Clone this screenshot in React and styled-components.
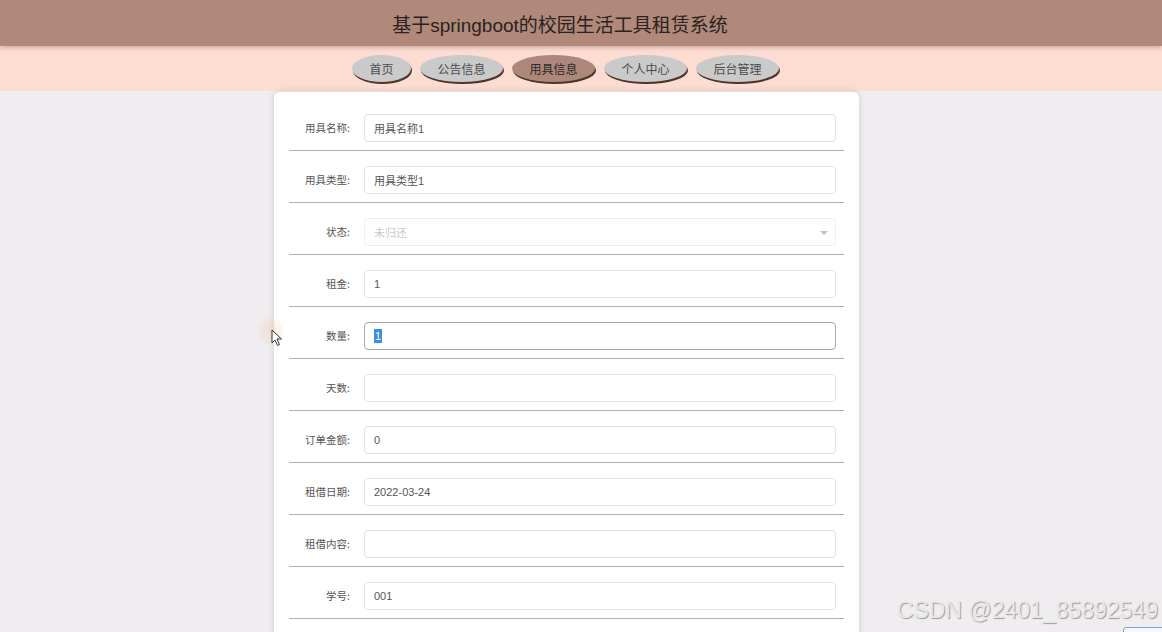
import styled, { createGlobalStyle } from "styled-components";

const GlobalStyle = createGlobalStyle`
  html, body {
    margin: 0;
    padding: 0;
    background: #efedf0;
    font-family: "Liberation Sans", "Noto Sans CJK SC", sans-serif;
    overflow: hidden;
  }
`;

const fields = [
  { label: "用具名称", value: "用具名称1" },
  { label: "用具类型", value: "用具类型1" },
  { label: "状态", value: "未归还", type: "select" },
  { label: "租金", value: "1" },
  { label: "数量", value: "1", focused: true },
  { label: "天数", value: "" },
  { label: "订单金额", value: "0" },
  { label: "租借日期", value: "2022-03-24" },
  { label: "租借内容", value: "" },
  { label: "学号", value: "001" },
  { label: "姓名", value: "姓名1" },
  { label: "手机号", value: "13823888881" },
];

const navItems = ["首页", "公告信息", "用具信息", "个人中心", "后台管理"];

const App = () => {
  return (
    <>
      <GlobalStyle />
      <Page>
        <Header>
          <Title>基于springboot的校园生活工具租赁系统</Title>
        </Header>
        <Nav>
          {navItems.map((item) => (
            <NavButton key={item} $active={item === "用具信息"}>{item}</NavButton>
          ))}
        </Nav>
        <Main>
          <Card>
            {fields.map((f) => (
              <Row key={f.label}>
                <Label>{f.label}:</Label>
                {f.type === "select" ? (
                  <Field $disabled>
                    {f.value}
                    <Caret />
                  </Field>
                ) : (
                  <Field $focused={f.focused}>
                    {f.focused ? <Selected>{f.value}</Selected> : f.value}
                  </Field>
                )}
              </Row>
            ))}
          </Card>
        </Main>
        <CursorMark>
          <svg width="12" height="18" viewBox="0 0 12 18">
            <path d="M1 1 L1 14 L4 11 L6.5 16.5 L8.5 15.5 L6 10 L10.5 10 Z" fill="#fff" stroke="#333" strokeWidth="1" />
          </svg>
        </CursorMark>
        <Watermark>CSDN @2401_85892549</Watermark>
        <CornerTab />
      </Page>
    </>
  );
};

const Page = styled.div`
  position: relative;
  min-height: 632px;
`;

const Header = styled.header`
  position: relative;
  z-index: 2;
  height: 46px;
  background: #b0897b;
  box-shadow: 0 2px 4px rgba(80, 40, 30, 0.25);
  display: flex;
  align-items: center;
  justify-content: center;
  padding-right: 42px;
`;

const Title = styled.h1`
  margin: 0;
  font-size: 19px;
  font-weight: 400;
  color: #2b2220;
`;

const Nav = styled.nav`
  height: 45px;
  background: #fddcd2;
  display: flex;
  align-items: center;
  justify-content: center;
  gap: 9px;
  padding-right: 31px;
`;

const NavButton = styled.button`
  height: 27px;
  margin-top: -1px;
  padding: 0 17.5px;
  border: none;
  border-radius: 50%;
  background: ${({ $active }) => ($active ? "#ad887a" : "#cacaca")};
  box-shadow: 1px 2px 0 #4e3429;
  font-family: "Liberation Sans", "Noto Sans CJK SC", sans-serif;
  font-size: 12px;
  color: ${({ $active }) => ($active ? "#2a2a2a" : "#4a4a4a")};
  cursor: pointer;
`;

const Main = styled.main`
  display: flex;
  justify-content: center;
  padding: 1px 29px 0 0;
`;

const Card = styled.section`
  width: 585px;
  box-sizing: border-box;
  background: #fff;
  border-radius: 6px 6px 0 0;
  box-shadow: 0 0 6px rgba(90, 60, 60, 0.2);
  padding: 7px 15px 20px;
`;

const Row = styled.div`
  display: flex;
  align-items: center;
  gap: 14px;
  padding: 15px 8px 8px 0;
  border-bottom: 1px solid #bba9ae;
`;

const Label = styled.label`
  width: 61px;
  flex-shrink: 0;
  text-align: right;
  font-family: "Noto Sans CJK SC", sans-serif;
  font-size: 10.5px;
  line-height: 14px;
  color: #555;
  white-space: nowrap;
`;

const Field = styled.div`
  position: relative;
  flex: 1;
  height: 28px;
  box-sizing: border-box;
  display: flex;
  align-items: center;
  padding: 0 9px;
  border: 1px solid ${({ $focused, $disabled }) => ($focused ? "#a9a9ad" : $disabled ? "#eceef2" : "#dfe1e6")};
  border-radius: 4px;
  background: #fff;
  font-family: "Liberation Sans", "Noto Sans CJK SC", sans-serif;
  font-size: 11px;
  color: ${({ $disabled }) => ($disabled ? "#c8cad0" : "#555")};
`;

const Selected = styled.span`
  background: #3b8ee8;
  color: #fff;
  padding: 0 1px;
  line-height: 14px;
`;

const Caret = styled.span`
  position: absolute;
  right: 7px;
  top: 12px;
  width: 0;
  height: 0;
  border-left: 4px solid transparent;
  border-right: 4px solid transparent;
  border-top: 4px solid #c0c4cc;
`;

const CursorMark = styled.div`
  position: absolute;
  left: 258px;
  top: 318px;
  width: 26px;
  height: 26px;
  border-radius: 50%;
  background: radial-gradient(circle, rgba(245, 200, 150, 0.35) 0%, rgba(245, 200, 150, 0.15) 60%, rgba(245, 200, 150, 0) 100%);
  svg {
    position: absolute;
    left: 13px;
    top: 11px;
  }
`;

const Watermark = styled.div`
  position: absolute;
  right: 4px;
  top: 597px;
  font-family: "Liberation Sans", sans-serif;
  font-size: 23px;
  color: #e8e8ea;
  text-shadow: 1px 1px 1px rgba(0, 0, 0, 0.35);
  pointer-events: none;
`;

const CornerTab = styled.div`
  position: absolute;
  left: 1123px;
  top: 627px;
  width: 44px;
  height: 10px;
  border: 1px solid #7aa7d8;
  border-radius: 3px;
  background: #f6f8fb;
`;

export default App;
